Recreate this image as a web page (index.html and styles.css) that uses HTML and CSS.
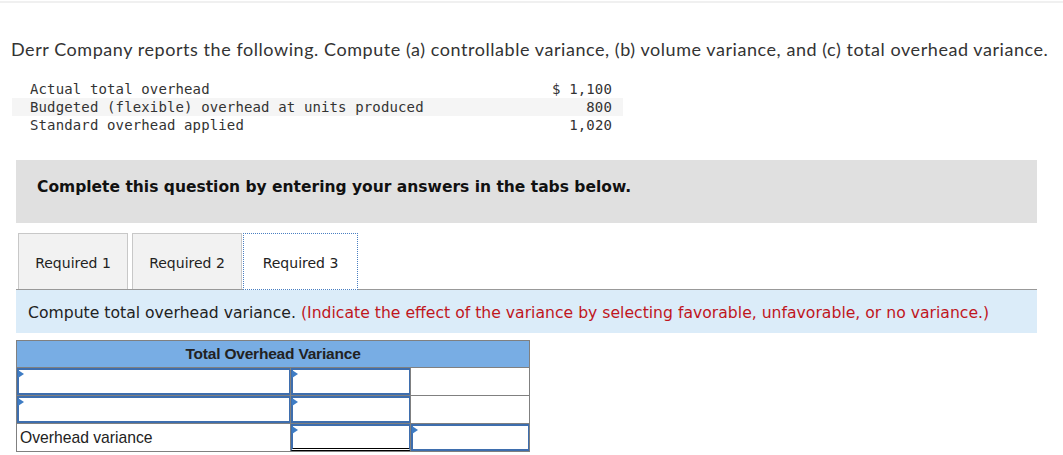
FILE: index.html
```html
<!DOCTYPE html>
<html>
<head>
<meta charset="utf-8">
<link rel="stylesheet" href="styles.css">
</head>
<body>
<div class="topline"></div>
<div class="page">
  <p class="question">Derr Company reports the following. Compute (a) controllable variance, (b) volume variance, and (c) total overhead variance.</p>
  <div class="data">
    <div class="drow"><span>Actual total overhead</span><span>$ 1,100</span></div>
    <div class="drow alt"><span>Budgeted (flexible) overhead at units produced</span><span>800</span></div>
    <div class="drow"><span>Standard overhead applied</span><span>1,020</span></div>
  </div>
  <div class="complete">Complete this question by entering your answers in the tabs below.</div>
  <div class="tabs">
    <div class="tab">Required 1</div>
    <div class="tab">Required 2</div>
    <div class="tab active">Required 3</div>
  </div>
  <div class="instr">Compute total overhead variance. <span class="red">(Indicate the effect of the variance by selecting favorable, unfavorable, or no variance.)</span></div>
  <table class="grid">
    <tr><th colspan="3">Total Overhead Variance</th></tr>
    <tr>
      <td class="c1"><div class="inp"><i class="tri"></i></div></td>
      <td class="c2"><div class="inp"><i class="tri"></i></div></td>
      <td class="c3"></td>
    </tr>
    <tr>
      <td class="c1"><div class="inp"><i class="tri"></i></div></td>
      <td class="c2"><div class="inp"><i class="tri"></i></div></td>
      <td class="c3"></td>
    </tr>
    <tr>
      <td class="c1 label">Overhead variance</td>
      <td class="c2 dbl"><div class="inp"><i class="tri"></i></div></td>
      <td class="c3"><div class="inp"><i class="tri"></i></div></td>
    </tr>
  </table>
</div>
</body>
</html>
```

FILE: styles.css
```css
html, body { margin: 0; padding: 0; background: #fff; }
.topline { height: 2px; margin-top: 1px; background: #f0f0f0; }
.page { padding: 0 26px 0 16px; }
.question {
  margin: 36px 0 0 -5px;
  font-family: Lato, "Open Sans", sans-serif;
  font-size: 18px;
  letter-spacing: 0.555px;
  color: #333;
  line-height: 20px;
  white-space: nowrap;
}
.data {
  margin: 21px 0 0 -4px;
  width: 611px;
  font-family: "DejaVu Sans Mono", monospace;
  font-size: 14px;
  letter-spacing: 0.13px;
  color: #333;
}
.drow {
  display: flex;
  justify-content: space-between;
  height: 18px;
  line-height: 18px;
  padding: 0 11px 0 18px;
}
.drow.alt { background: #f5f5f5; }
.complete {
  margin-top: 26px;
  height: 63px;
  box-sizing: border-box;
  background: #e0e0e0;
  display: flex;
  align-items: center;
  padding: 0 0 10px 21px;
  font-family: "DejaVu Sans", Verdana, sans-serif;
  font-weight: bold;
  font-size: 15.5px;
  color: #111;
}
.tabs {
  margin-top: 10px;
  display: flex;
  padding-left: 2px;
  border-bottom: 1px solid #999;
  height: 56px;
}
.tab {
  border: 1px solid #c8c8c8;
  border-bottom: none;
  background: #f2f2f2;
  display: flex;
  align-items: center;
  justify-content: center;
  padding-top: 3px;
  box-sizing: border-box;
  width: 110px;
  height: 56px;
  font-family: "DejaVu Sans", Verdana, sans-serif;
  font-size: 14px;
  color: #222;
  margin-right: 4px;
}
.tab + .tab { margin-right: 0; }
.tab.active {
  width: 115px;
  background: #fff;
  border: 1px dotted #4a7fc1;
  height: 57px;
  margin-left: 1px;
}
.instr {
  height: 43px;
  background: #dbecf9;
  display: flex;
  align-items: center;
  padding: 2px 0 0 12px;
  box-sizing: border-box;
  font-family: "DejaVu Sans", Verdana, sans-serif;
  font-size: 15.65px;
  color: #222;
  white-space: nowrap;
}
.red { color: #c0161d; margin-left: 5px; }
.grid {
  margin-top: 7px;
  border-collapse: collapse;
  width: 514px;
  font-family: "Liberation Sans", Arial, sans-serif;
}
.grid th {
  height: 26px;
  background: #78ade4;
  border: 1px solid #808080;
  font-size: 15.5px;
  letter-spacing: -0.2px;
  font-weight: bold;
  color: #222;
  padding: 0;
  text-align: center;
}
.grid td {
  border: 1px solid #808080;
  height: 27px;
  padding: 0;
  font-size: 15.7px;
  color: #222;
  vertical-align: top;
}
.c1 { width: 272px; }
.c2 { width: 120px; }
.c3 { width: 119px; }
.label { padding-left: 3px !important; vertical-align: middle !important; }
.inp {
  position: relative;
  height: 27px;
  box-sizing: border-box;
  border: 2px solid #3e6eae;
  border-right-width: 1px;
  background: #fff;
}
.dbl .inp { border-bottom: 3px double #000; }
.tri {
  position: absolute;
  left: -1px;
  top: 0;
  width: 0;
  height: 0;
  border-top: 4px solid transparent;
  border-bottom: 4px solid transparent;
  border-left: 6px solid #3e7cc4;
}
```
